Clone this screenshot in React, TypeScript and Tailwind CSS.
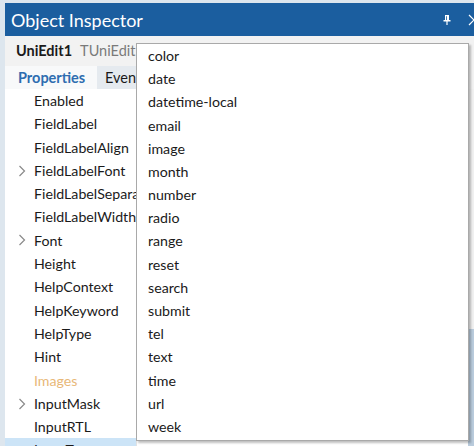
const props = [
  { name: 'Enabled' },
  { name: 'FieldLabel' },
  { name: 'FieldLabelAlign' },
  { name: 'FieldLabelFont', expand: true },
  { name: 'FieldLabelSeparator' },
  { name: 'FieldLabelWidth' },
  { name: 'Font', expand: true },
  { name: 'Height' },
  { name: 'HelpContext' },
  { name: 'HelpKeyword' },
  { name: 'HelpType' },
  { name: 'Hint' },
  { name: 'Images', muted: true },
  { name: 'InputMask', expand: true },
  { name: 'InputRTL' },
  { name: 'InputType', selected: true },
];

const inputTypes = [
  'color',
  'date',
  'datetime-local',
  'email',
  'image',
  'month',
  'number',
  'radio',
  'range',
  'reset',
  'search',
  'submit',
  'tel',
  'text',
  'time',
  'url',
  'week',
];

function Chevron() {
  return (
    <svg width="8" height="12" viewBox="0 0 8 12" className="shrink-0">
      <path d="M1.5 1 L6.5 6 L1.5 11" fill="none" stroke="#8a8a8a" strokeWidth="1.2" />
    </svg>
  );
}

export default function App() {
  return (
    <div
      className="relative w-[474px] h-[446px] overflow-hidden bg-[#dde6ee] pl-[5px] pt-[3px]"
      style={{ fontFamily: 'Lato, "Open Sans", sans-serif' }}
    >
      <div className="flex flex-col h-full">
        {/* Title bar */}
        <div className="h-[33px] shrink-0 bg-[#1b5e9f] flex items-center pl-[6px] text-white">
          <span className="text-[18px] leading-none">Object Inspector</span>
          <div className="ml-auto mr-[-6px] flex items-center gap-[16px]">
            <svg width="10" height="12" viewBox="0 0 10 12">
              <path d="M3 1 H7 V6 H8.5 V7.5 H5.6 V11 H4.4 V7.5 H1.5 V6 H3 Z M4.2 2.2 V6 H5 V2.2 Z" fill="#ffffff" fillRule="evenodd" />
            </svg>
            <svg width="12" height="12" viewBox="0 0 12 12">
              <path d="M1 1 L11 11 M11 1 L1 11" stroke="#ffffff" strokeWidth="1.2" />
            </svg>
          </div>
        </div>

        {/* Component header */}
        <div className="h-[30px] shrink-0 bg-[#f2f2f2] flex items-center pl-[11px] gap-[8px] text-[14.5px]">
          <span className="font-bold text-[#1a1a1a]">UniEdit1</span>
          <span className="text-[#7a7a7a]">TUniEdit</span>
        </div>

        {/* Tabs */}
        <div className="h-[23px] shrink-0 bg-[#f2f2f2] flex items-end text-[14.5px]">
          <div className="h-[23px] w-[92px] bg-[#f8f9fa] flex items-center pl-[13px] font-bold text-[#2e6db0]">
            Properties
          </div>
          <div className="h-[23px] w-[80px] bg-[#e5eaef] flex items-center pl-[8px] text-[#1a1a1a]">
            Events
          </div>
        </div>

        {/* Property list */}
        <div className="flex-1 bg-white flex">
          <div className="w-[131px] shrink-0 flex flex-col text-[14.2px] text-[#1a1a1a]">
            {props.map((p) => (
              <div
                key={p.name}
                className={`h-[23.3px] shrink-0 flex items-center whitespace-nowrap overflow-hidden ${
                  p.selected ? 'bg-[#cce4f7]' : ''
                }`}
              >
                <span className="w-[29px] shrink-0 flex justify-start pl-[13px]">
                  {p.expand ? <Chevron /> : null}
                </span>
                <span className={p.muted ? 'text-[#e8b878]' : ''}>{p.name}</span>
              </div>
            ))}
          </div>
          <div className="flex-1 border-l border-[#e2e2e2]" />
          <div className="w-[6px] flex flex-col">
            <div className="h-[240px] bg-[#f0f0f0]" />
            <div className="flex-1 bg-[#b9cbdc]" />
          </div>
        </div>
      </div>

      {/* Dropdown list */}
      <div className="absolute left-[136px] top-[43px] w-[333px] h-[398px] bg-white border border-[#a9a9a9] shadow-[2px_2px_2px_rgba(0,0,0,0.25)]">
        {inputTypes.map((t) => (
          <div key={t} className="h-[23.2px] flex items-center pl-[11px] text-[14.2px] text-[#1a1a1a]">
            {t}
          </div>
        ))}
      </div>
    </div>
  );
}
